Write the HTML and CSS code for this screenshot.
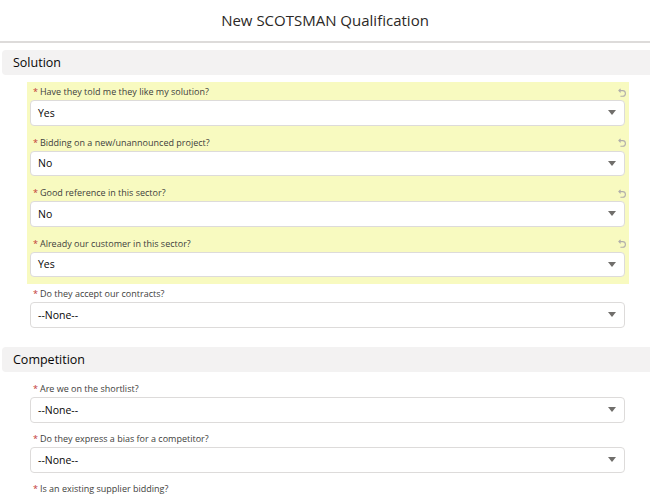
FILE: index.html
```html
<!DOCTYPE html>
<html lang="en">
<head>
  <meta charset="UTF-8" />
  <meta name="viewport" content="width=device-width, initial-scale=1" />
  <title>New SCOTSMAN Qualification</title>
  <link rel="stylesheet" href="styles.css">
</head>
<body>
  <div class="modal">
    <h2 class="title">New SCOTSMAN Qualification</h2>

    <div class="section">
      <h3 class="section-header">Solution</h3>

      <div class="changed">
        <div class="field">
          <div class="label-row">
            <label><abbr>*</abbr>Have they told me they like my solution?</label>
            <svg class="undo" viewBox="0 0 8 10" width="8" height="10"><path d="M2.6 0.8 L0.9 2.6 L2.6 4.4 M0.9 2.6 H4.6 A2.8 2.8 0 0 1 4.6 8.2 H2.4" fill="none" stroke="#b0adab" stroke-width="1.1"/></svg>
          </div>
          <div class="select"><span>Yes</span><i class="caret"></i></div>
        </div>

        <div class="field">
          <div class="label-row">
            <label><abbr>*</abbr>Bidding on a new/unannounced project?</label>
            <svg class="undo" viewBox="0 0 8 10" width="8" height="10"><path d="M2.6 0.8 L0.9 2.6 L2.6 4.4 M0.9 2.6 H4.6 A2.8 2.8 0 0 1 4.6 8.2 H2.4" fill="none" stroke="#b0adab" stroke-width="1.1"/></svg>
          </div>
          <div class="select"><span>No</span><i class="caret"></i></div>
        </div>

        <div class="field">
          <div class="label-row">
            <label><abbr>*</abbr>Good reference in this sector?</label>
            <svg class="undo" viewBox="0 0 8 10" width="8" height="10"><path d="M2.6 0.8 L0.9 2.6 L2.6 4.4 M0.9 2.6 H4.6 A2.8 2.8 0 0 1 4.6 8.2 H2.4" fill="none" stroke="#b0adab" stroke-width="1.1"/></svg>
          </div>
          <div class="select"><span>No</span><i class="caret"></i></div>
        </div>

        <div class="field">
          <div class="label-row">
            <label><abbr>*</abbr>Already our customer in this sector?</label>
            <svg class="undo" viewBox="0 0 8 10" width="8" height="10"><path d="M2.6 0.8 L0.9 2.6 L2.6 4.4 M0.9 2.6 H4.6 A2.8 2.8 0 0 1 4.6 8.2 H2.4" fill="none" stroke="#b0adab" stroke-width="1.1"/></svg>
          </div>
          <div class="select"><span>Yes</span><i class="caret"></i></div>
        </div>
      </div>

      <div class="fields">
        <div class="field">
          <div class="label-row">
            <label><abbr>*</abbr>Do they accept our contracts?</label>
          </div>
          <div class="select"><span>--None--</span><i class="caret"></i></div>
        </div>
      </div>
    </div>

    <div class="section">
      <h3 class="section-header">Competition</h3>

      <div class="fields">
        <div class="field">
          <div class="label-row">
            <label><abbr>*</abbr>Are we on the shortlist?</label>
          </div>
          <div class="select"><span>--None--</span><i class="caret"></i></div>
        </div>

        <div class="field">
          <div class="label-row">
            <label><abbr>*</abbr>Do they express a bias for a competitor?</label>
          </div>
          <div class="select"><span>--None--</span><i class="caret"></i></div>
        </div>

        <div class="field">
          <div class="label-row">
            <label><abbr>*</abbr>Is an existing supplier bidding?</label>
          </div>
        </div>
      </div>
    </div>
  </div>
</body>
</html>
```

FILE: styles.css
```css
body {
  font-family: 'Open Sans', 'Liberation Sans', sans-serif;
  background: #fff;
  color: #080707;
  margin: 0;
  overflow: hidden;
}

.modal {
  width: 650px;
  height: 496px;
  overflow: hidden;
}

.title {
  margin: 0;
  height: 41px;
  line-height: 41px;
  text-align: center;
  font-size: 15px;
  font-weight: 400;
  color: #2b2826;
  border-bottom: 2px solid #dddbda;
}

.section {
  padding-top: 7px;
}

.section + .section {
  padding-top: 13px;
}

.section-header {
  margin: 0 0 7px 2px;
  height: 25px;
  line-height: 25px;
  padding-left: 11px;
  background: #f3f2f2;
  border-radius: 4px 0 0 4px;
  font-size: 12.5px;
  font-weight: 400;
  color: #080707;
}

.changed {
  margin-left: 27px;
  width: 602px;
  padding-left: 3px;
  box-sizing: border-box;
  background: #f8fac0;
}

.fields {
  margin-left: 30px;
}

.field {
  width: 595px;
  padding-bottom: 7px;
}

.fields .field {
  padding-bottom: 6.5px;
}

.label-row {
  display: flex;
  align-items: center;
  justify-content: space-between;
  height: 18px;
  padding-top: 1px;
  box-sizing: border-box;
}

.fields .label-row {
  padding-top: 0;
}

label {
  font-size: 9px;
  color: #3e3e3c;
  padding-left: 3px;
}

abbr {
  color: #c23934;
  margin-right: 2px;
}

.undo {
  margin-right: -1px;
  margin-top: 2px;
}

.select {
  display: flex;
  align-items: center;
  justify-content: space-between;
  height: 25.5px;
  box-sizing: border-box;
  padding: 0 8px 0 7px;
  background: #fff;
  border: 1px solid #dddbda;
  border-radius: 4px;
  font-size: 10.5px;
  color: #080707;
}

.caret {
  width: 0;
  height: 0;
  border-left: 4px solid transparent;
  border-right: 4px solid transparent;
  border-top: 5px solid #706e6b;
}
```
